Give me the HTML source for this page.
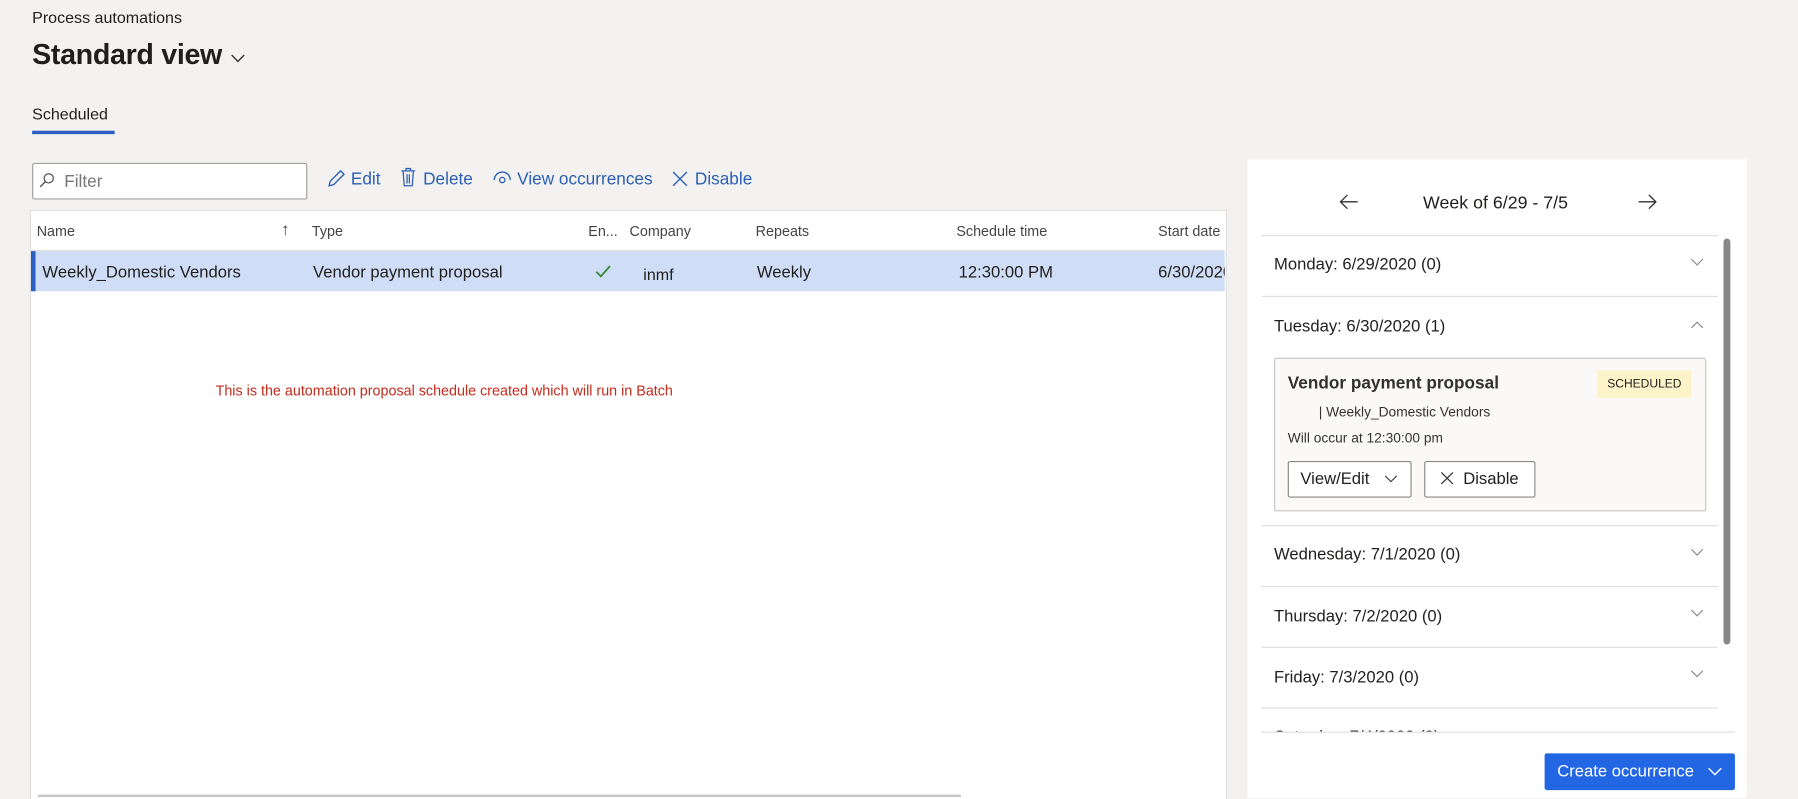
<!DOCTYPE html>
<html><head><style>
html,body{margin:0;padding:0;width:1798px;height:798px;overflow:hidden;background:#f3f2f1}
#w{position:absolute;left:0;top:0;width:1568px;height:696px;transform:scale(1.1467);transform-origin:0 0;font-family:"Liberation Sans",sans-serif;color:#201f1e}
.a{position:absolute;white-space:nowrap}
.blue{color:#2b5fb4}
.hd{font-size:12.5px;color:#444;top:195px}
.row{font-size:14.5px;top:230px}
.day{font-size:14.5px;left:1111px}
.dv{position:absolute;left:1100px;width:398px;height:1px;background:#e1dfdd}
.chev{position:absolute;left:1474px;width:12px;height:8px}
</style></head><body><div id="w">
<div class="a" style="left:28px;top:7px;font-size:14px">Process automations</div>
<div class="a" style="left:28px;top:34px;font-size:25px;font-weight:bold;letter-spacing:-0.3px">Standard view</div>
<svg class="a" style="left:201px;top:47px" width="13" height="8"><path d="M1 1l5.5 5.5L12 1" fill="none" stroke="#333" stroke-width="1.2"/></svg>
<div class="a" style="left:28px;top:91px;font-size:14px">Scheduled</div>
<div class="a" style="left:28px;top:114px;width:72px;height:3px;background:#2b5fc4"></div>
<div class="a" style="left:28px;top:142px;width:238px;height:30px;background:#fff;border:1px solid #a19f9d;border-radius:2px"></div>
<svg class="a" style="left:34px;top:150px" width="14" height="14"><circle cx="8.5" cy="5.5" r="4" fill="none" stroke="#555" stroke-width="1.1"/><path d="M5.5 8.5L1 13" stroke="#555" stroke-width="1.2"/></svg>
<div class="a" style="left:56px;top:150px;font-size:15px;color:#777">Filter</div>
<svg class="a" style="left:285px;top:147px" width="16" height="17"><path d="M2 15l1-4 9-9 3 3-9 9z" fill="none" stroke="#2b5fb4" stroke-width="1.2"/></svg>
<div class="a blue" style="left:306px;top:148px;font-size:15px">Edit</div>
<svg class="a" style="left:349px;top:146px" width="14" height="17"><path d="M1 3h12M5 3V1h4v2M2.5 3l1 13h7l1-13M6 6v8M8 6v8" fill="none" stroke="#2b5fb4" stroke-width="1.1"/></svg>
<div class="a blue" style="left:369px;top:148px;font-size:15px">Delete</div>
<svg class="a" style="left:430px;top:149px" width="16" height="12"><path d="M1 8a7 7 0 0 1 14 0" fill="none" stroke="#2b5fb4" stroke-width="1.2"/><circle cx="8" cy="8" r="2.3" fill="none" stroke="#2b5fb4" stroke-width="1.1"/></svg>
<div class="a blue" style="left:451px;top:148px;font-size:15px">View occurrences</div>
<svg class="a" style="left:586px;top:149px" width="14" height="14"><path d="M1 1l12 12M13 1L1 13" stroke="#2b5fb4" stroke-width="1.2"/></svg>
<div class="a blue" style="left:606px;top:148px;font-size:15px">Disable</div>

<div class="a" style="left:26px;top:183px;width:1042px;height:513px;background:#fff;border:1px solid #e1dfdd;border-bottom:none"></div>
<div class="a hd" style="left:32px">Name</div>
<div class="a hd" style="left:245px;font-size:15px;top:192px">↑</div>
<div class="a hd" style="left:272px">Type</div>
<div class="a hd" style="left:513px">En...</div>
<div class="a hd" style="left:549px">Company</div>
<div class="a hd" style="left:659px">Repeats</div>
<div class="a hd" style="left:834px">Schedule time</div>
<div class="a hd" style="left:1010px;width:58px;overflow:hidden">Start date</div>
<div class="a" style="left:27px;top:218px;width:1041px;height:1px;background:#e1dfdd"></div>
<div class="a" style="left:27px;top:219px;width:1041px;height:35px;background:#cfddf6"></div>
<div class="a" style="left:27px;top:219px;width:4px;height:35px;background:#2b5fc4"></div>
<div class="a row" style="left:37px">Weekly_Domestic Vendors</div>
<div class="a row" style="left:273px">Vendor payment proposal</div>
<svg class="a" style="left:519px;top:231px" width="14" height="11"><path d="M1 6l4 4 8-9" fill="none" stroke="#3a8a3a" stroke-width="1.6"/></svg>
<div class="a row" style="left:561px;top:231px;font-size:14px">inmf</div>
<div class="a row" style="left:660px">Weekly</div>
<div class="a row" style="left:836px">12:30:00 PM</div>
<div class="a row" style="left:1010px;width:58px;overflow:hidden">6/30/2020</div>
<div class="a" style="left:188px;top:334px;font-size:12.5px;color:#c42b1c">This is the automation proposal schedule created which will run in Batch</div>
<div class="a" style="left:33px;top:693px;width:805px;height:2px;background:#c8c6c4"></div>

<div class="a" style="left:1088px;top:139px;width:435px;height:557px;background:#fff"></div>
<svg class="a" style="left:1167px;top:169px" width="18" height="14"><path d="M17 7H2M8 1L2 7l6 6" fill="none" stroke="#333" stroke-width="1.2"/></svg>
<div class="a" style="left:1241px;top:169px;font-size:15.5px">Week of 6/29 - 7/5</div>
<svg class="a" style="left:1428px;top:169px" width="18" height="14"><path d="M1 7h15M10 1l6 6-6 6" fill="none" stroke="#333" stroke-width="1.2"/></svg>
<div class="dv" style="top:205px"></div>
<div class="a" style="left:1503px;top:208px;width:6px;height:354px;background:#8a8886;border-radius:3px"></div>
<div class="a day" style="top:223px">Monday: 6/29/2020 (0)</div>
<svg class="chev" style="top:225px"><path d="M1 1l5 5 5-5" fill="none" stroke="#888" stroke-width="1"/></svg>
<div class="dv" style="top:258px"></div>
<div class="a day" style="top:277px">Tuesday: 6/30/2020 (1)</div>
<svg class="chev" style="top:279px"><path d="M1 7l5-5 5 5" fill="none" stroke="#888" stroke-width="1"/></svg>
<div class="a" style="left:1111px;top:312px;width:375px;height:132px;background:#faf9f8;border:1px solid #c8c6c4;border-radius:2px"></div>
<div class="a" style="left:1123px;top:326px;font-size:15px;font-weight:bold;color:#323130">Vendor payment proposal</div>
<div class="a" style="left:1393px;top:323px;width:82px;height:24px;background:#fdf3c9;font-size:10.5px;line-height:24px;text-align:center">SCHEDULED</div>
<div class="a" style="left:1150px;top:352px;font-size:12px;color:#333">| Weekly_Domestic Vendors</div>
<div class="a" style="left:1123px;top:375px;font-size:12px;color:#333">Will occur at 12:30:00 pm</div>
<div class="a" style="left:1123px;top:402px;width:106px;height:30px;border:1px solid #8a8886;background:#fff;border-radius:2px"></div>
<div class="a" style="left:1134px;top:410px;font-size:14.5px">View/Edit</div>
<svg class="a" style="left:1207px;top:414px" width="12" height="8"><path d="M1 1l5 5 5-5" fill="none" stroke="#333" stroke-width="1"/></svg>
<div class="a" style="left:1242px;top:402px;width:95px;height:30px;border:1px solid #8a8886;background:#fff;border-radius:2px"></div>
<svg class="a" style="left:1256px;top:411px" width="12" height="12"><path d="M1 1l10 10M11 1L1 11" stroke="#333" stroke-width="1.1"/></svg>
<div class="a" style="left:1276px;top:410px;font-size:14.5px">Disable</div>
<div class="dv" style="top:458px"></div>
<div class="a day" style="top:476px">Wednesday: 7/1/2020 (0)</div>
<svg class="chev" style="top:478px"><path d="M1 1l5 5 5-5" fill="none" stroke="#888" stroke-width="1"/></svg>
<div class="dv" style="top:511px"></div>
<div class="a day" style="top:530px">Thursday: 7/2/2020 (0)</div>
<svg class="chev" style="top:531px"><path d="M1 1l5 5 5-5" fill="none" stroke="#888" stroke-width="1"/></svg>
<div class="dv" style="top:564px"></div>
<div class="a day" style="top:583px">Friday: 7/3/2020 (0)</div>
<svg class="chev" style="top:584px"><path d="M1 1l5 5 5-5" fill="none" stroke="#888" stroke-width="1"/></svg>
<div class="dv" style="top:617px"></div>
<div class="a" style="left:1100px;top:630px;width:413px;height:8px;overflow:hidden"><div style="position:absolute;top:5px;left:11px;font-size:14.5px">Saturday: 7/4/2020 (0)</div></div>
<div class="a" style="left:1100px;top:638px;width:413px;height:1px;background:#e1dfdd"></div>
<div class="a" style="left:1347px;top:657px;width:166px;height:32px;background:#2266e3;border-radius:2px"></div>
<div class="a" style="left:1358px;top:665px;font-size:14.5px;color:#fff">Create occurrence</div>
<svg class="a" style="left:1489px;top:669px" width="13" height="8"><path d="M1 1l5.5 5.5L12 1" fill="none" stroke="#fff" stroke-width="1.2"/></svg>
</div></body></html>
